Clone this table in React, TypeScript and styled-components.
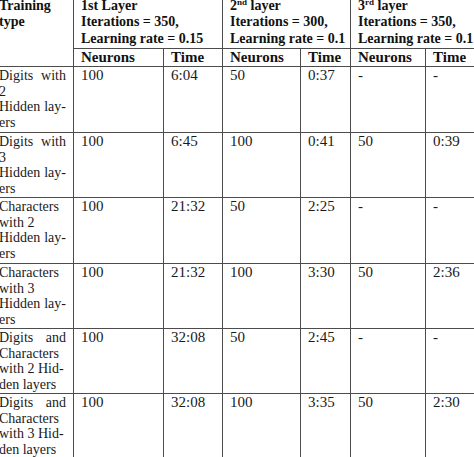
import React from "react";
import styled, { createGlobalStyle } from "styled-components";

const Global = createGlobalStyle`
  html, body {
    margin: 0;
    padding: 0;
    background: #ffffff;
  }
  body {
    font-family: "Liberation Serif", "Times New Roman", serif;
    color: #141414;
  }
`;

const Page = styled.div`
  width: 474px;
  height: 457px;
  overflow: hidden;
  background: #ffffff;
`;

const Grid = styled.div`
  display: grid;
  grid-template-columns: 83px 90px 59px 78px 50px 75px 60px;
  grid-template-rows: 51px 18px 66px 65px 66px 65px 65px 65px;
  margin-left: -9px;
  margin-top: -2px;
  width: max-content;
`;

const Cell = styled.div<{ $col?: string; $row?: string; $first?: boolean }>`
  box-sizing: border-box;
  border-right: 1px solid #4c4c4c;
  border-bottom: 1px solid #4c4c4c;
  padding: 1px 7px 0 ${(p) => (p.$first ? "8px" : "7px")};
  font-size: ${(p) => (p.$first ? "14px" : "15px")};
  line-height: 15.6px;
  ${(p) => (p.$col ? `grid-column: ${p.$col};` : "")}
  ${(p) => (p.$row ? `grid-row: ${p.$row};` : "")}
  white-space: nowrap;
  color: #1a1a1a;
`;

const HeadCell = styled(Cell)`
  font-weight: 700;
  font-size: 14px;
  line-height: 16.3px;
  padding-top: 0;
  color: #111;
`;

const SubHeadCell = styled(Cell)`
  font-weight: 700;
  font-size: 15px;
  line-height: 17px;
  padding-top: 0;
  color: #111;
`;

const Line = styled.div<{ $justify?: boolean }>`
  display: block;
  text-align: ${(p) => (p.$justify ? "justify" : "left")};
  text-align-last: ${(p) => (p.$justify ? "justify" : "left")};
`;

const Sup = styled.sup`
  font-size: 9px;
  line-height: 0;
  vertical-align: 5px;
`;

type Row = {
  label: { text: string; justify?: boolean }[];
  values: string[];
};

const rows: Row[] = [
  {
    label: [
      { text: "Digits with", justify: true },
      { text: "2" },
      { text: "Hidden lay-", justify: true },
      { text: "ers" },
    ],
    values: ["100", "6:04", "50", "0:37", "-", "-"],
  },
  {
    label: [
      { text: "Digits with", justify: true },
      { text: "3" },
      { text: "Hidden lay-", justify: true },
      { text: "ers" },
    ],
    values: ["100", "6:45", "100", "0:41", "50", "0:39"],
  },
  {
    label: [{ text: "Characters" }, { text: "with 2" }, { text: "Hidden lay-", justify: true }, { text: "ers" }],
    values: ["100", "21:32", "50", "2:25", "-", "-"],
  },
  {
    label: [{ text: "Characters" }, { text: "with 3" }, { text: "Hidden lay-", justify: true }, { text: "ers" }],
    values: ["100", "21:32", "100", "3:30", "50", "2:36"],
  },
  {
    label: [
      { text: "Digits and", justify: true },
      { text: "Characters" },
      { text: "with 2 Hid-" },
      { text: "den layers" },
    ],
    values: ["100", "32:08", "50", "2:45", "-", "-"],
  },
  {
    label: [
      { text: "Digits and", justify: true },
      { text: "Characters" },
      { text: "with 3 Hid-" },
      { text: "den layers" },
    ],
    values: ["100", "32:08", "100", "3:35", "50", "2:30"],
  },
];

export default function App() {
  return (
    <Page>
      <Global />
      <Grid>
        <HeadCell $row="1 / span 2" $first>
          <Line>Training</Line>
          <Line>type</Line>
        </HeadCell>
        <HeadCell $col="2 / span 2">
          <Line>1st Layer</Line>
          <Line>Iterations = 350,</Line>
          <Line>Learning rate = 0.15</Line>
        </HeadCell>
        <HeadCell $col="4 / span 2">
          <Line>
            2<Sup>nd</Sup> layer
          </Line>
          <Line>Iterations = 300,</Line>
          <Line>Learning rate = 0.1</Line>
        </HeadCell>
        <HeadCell $col="6 / span 2">
          <Line>
            3<Sup>rd</Sup> layer
          </Line>
          <Line>Iterations = 350,</Line>
          <Line>Learning rate = 0.1</Line>
        </HeadCell>

        <SubHeadCell>Neurons</SubHeadCell>
        <SubHeadCell>Time</SubHeadCell>
        <SubHeadCell>Neurons</SubHeadCell>
        <SubHeadCell>Time</SubHeadCell>
        <SubHeadCell>Neurons</SubHeadCell>
        <SubHeadCell>Time</SubHeadCell>

        {rows.map((r, i) => (
          <React.Fragment key={i}>
            <Cell $first>
              {r.label.map((l, j) => (
                <Line key={j} $justify={l.justify}>
                  {l.text}
                </Line>
              ))}
            </Cell>
            {r.values.map((v, j) => (
              <Cell key={j}>{v}</Cell>
            ))}
          </React.Fragment>
        ))}
      </Grid>
    </Page>
  );
}
